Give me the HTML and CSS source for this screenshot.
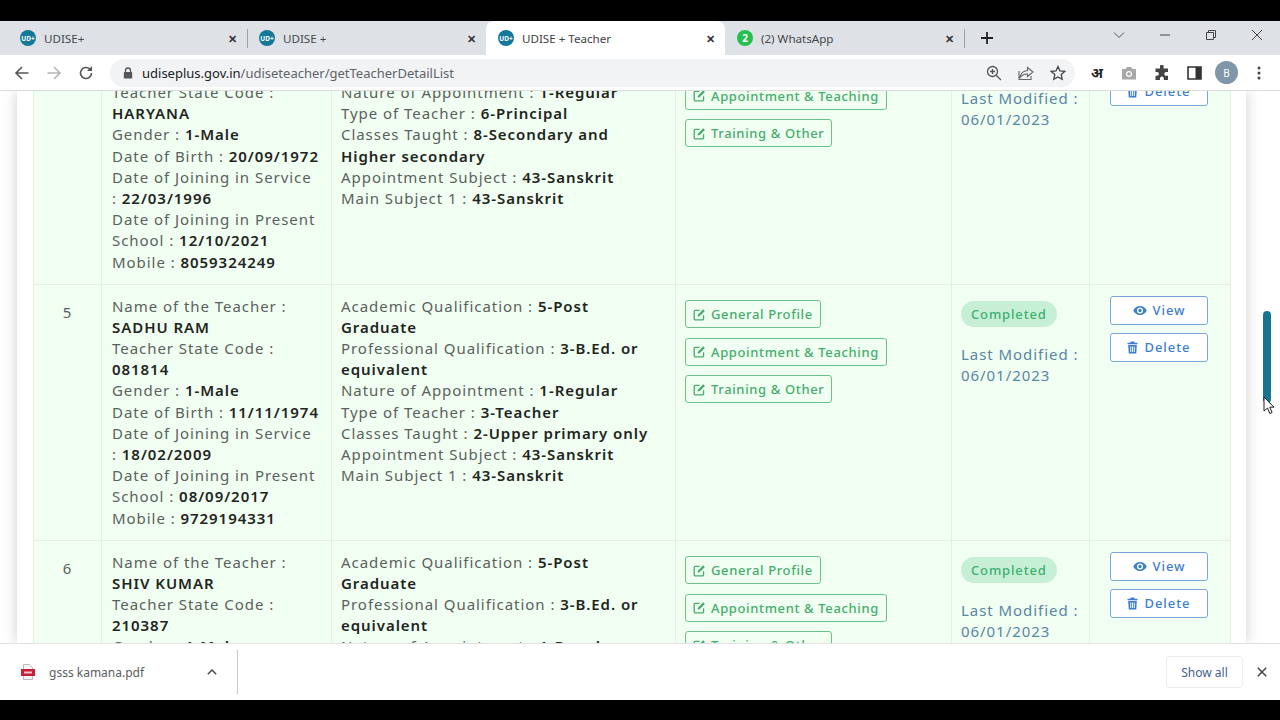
FILE: index.html
```html
<!DOCTYPE html>
<html lang="en">
<head>
<meta charset="utf-8">
<title>UDISE + Teacher</title>
<link rel="stylesheet" href="styles.css">
</head>
<body>
<svg class="defs" width="0" height="0" aria-hidden="true">
  <symbol id="edit" viewBox="0 0 16 16"><path d="M13 9v4.200a1.300 1.300 0 0 1-1.300 1.300H2.800a1.300 1.300 0 0 1-1.300-1.300V4.300A1.300 1.300 0 0 1 2.800 3H8" fill="none" stroke="currentColor" stroke-width="1.600"/><path d="M6 8.200 12.600 1.600l2 2L8 10.200l-2.400.4z" fill="currentColor"/></symbol>
  <symbol id="eye" viewBox="0 0 16 12"><path d="M8 .8C4.400.8 1.600 3.200.3 6c1.300 2.800 4.100 5.200 7.700 5.200s6.400-2.400 7.700-5.200C14.400 3.200 11.600.8 8 .8zm0 8.700A3.500 3.500 0 1 1 8 2.500a3.500 3.500 0 0 1 0 7zM8 4a2 2 0 1 0 0 4 2 2 0 0 0 0-4z" fill="currentColor"/></symbol>
  <symbol id="trash" viewBox="0 0 12 14"><path d="M4.300.5h3.400l.8 1.400H11.500v1.500H.5V1.900h3zM1.300 4.300h9.400l-.6 9.200H1.900zM3.600 5.800v6h1v-6zm1.900 0v6h1v-6zm1.900 0v6h1v-6z" fill="currentColor" fill-rule="evenodd"/></symbol>
</svg>

<div class="bar-black top"></div>

<div class="tabstrip">
  <div class="tab"><span class="fav">UD+</span><span class="tab-title">UDISE+</span><span class="tab-x">✕</span></div>
  <div class="tab"><span class="fav">UD+</span><span class="tab-title">UDISE +</span><span class="tab-x">✕</span></div>
  <div class="tab active"><span class="fav">UD+</span><span class="tab-title">UDISE + Teacher</span><span class="tab-x">✕</span></div>
  <div class="tab last"><span class="fav wa">2</span><span class="tab-title">(2) WhatsApp</span><span class="tab-x">✕</span></div>
  <svg class="plus" width="14" height="14" viewBox="0 0 14 14"><path d="M7 1v12M1 7h12" stroke="#222" stroke-width="1.800"/></svg>
  <div class="win-controls">
    <svg width="12" height="8" viewBox="0 0 12 8"><path d="M1 1.500 6 6.500l5-5" fill="none" stroke="#555" stroke-width="1"/></svg>
    <svg width="12" height="12" viewBox="0 0 12 12"><path d="M1 6h10" stroke="#444" stroke-width="1"/></svg>
    <svg width="12" height="12" viewBox="0 0 12 12"><path d="M1.500 3.500h7v7h-7zM3.500 3.500v-2h7v7h-2" fill="none" stroke="#444" stroke-width="1"/></svg>
    <svg width="12" height="12" viewBox="0 0 12 12"><path d="M1 1l10 10M11 1 1 11" stroke="#444" stroke-width="1"/></svg>
  </div>
</div>

<div class="toolbar">
  <svg class="nav" width="16" height="16" viewBox="0 0 16 16"><path d="M14.500 8H2M8 2 2 8l6 6" fill="none" stroke="#555" stroke-width="1.600"/></svg>
  <svg class="nav" width="16" height="16" viewBox="0 0 16 16"><path d="M1.500 8H14M8 2l6 6-6 6" fill="none" stroke="#b5b5b5" stroke-width="1.600"/></svg>
  <svg class="nav" width="16" height="16" viewBox="0 0 16 16"><path d="M13.500 8A5.500 5.500 0 1 1 11.800 4" fill="none" stroke="#555" stroke-width="1.600"/><path d="M14 1v5H9z" fill="#555"/></svg>
  <div class="omnibox">
    <svg class="lock" width="10" height="12" viewBox="0 0 10 12"><path d="M2.500 5V3.500a2.500 2.500 0 0 1 5 0V5" fill="none" stroke="#555" stroke-width="1.300"/><rect x=".8" y="5" width="8.400" height="6.500" rx="1" fill="#555"/></svg>
    <span class="url"><span class="host">udiseplus.gov.in</span>/udiseteacher/getTeacherDetailList</span>
    <div class="omni-icons">
      <svg width="16" height="16" viewBox="0 0 16 16"><circle cx="6.500" cy="6.500" r="5" fill="none" stroke="#555" stroke-width="1.300"/><path d="M10.200 10.200 15 15M6.500 4v5M4 6.500h5" stroke="#555" stroke-width="1.300"/></svg>
      <svg width="16" height="16" viewBox="0 0 16 16"><path d="M9.500 2.500 15 7l-5.500 4.500V9C6 9 3.500 10 2 13c.3-4 3-7 7.500-7.500z M1 6v8.500h12V11" fill="none" stroke="#666" stroke-width="1.100"/></svg>
      <svg width="16" height="16" viewBox="0 0 16 16"><path d="m8 1.500 2 4.400 4.800.5-3.600 3.200 1 4.700L8 11.900l-4.200 2.400 1-4.700L1.200 6.400 6 5.900z" fill="none" stroke="#444" stroke-width="1.300"/></svg>
    </div>
  </div>
  <div class="ext-icons">
    <span class="ext-hindi">अ</span>
    <svg width="16" height="14" viewBox="0 0 16 14"><path d="M1 3h3.500L6 1h4l1.500 2H15v10.500H1z" fill="#a8a8a8"/><circle cx="8" cy="8" r="3" fill="#fff"/><circle cx="8" cy="8" r="1.800" fill="#a8a8a8"/></svg>
    <svg width="16" height="16" viewBox="0 0 16 16"><path d="M6 1.500a1.800 1.800 0 0 1 3.600 0V3.500H14V7h-1.800a1.900 1.900 0 0 0 0 3.800H14V15H9.800v-1.500a1.900 1.900 0 0 0-3.800 0V15H1.500v-4.300H3a1.900 1.900 0 0 0 0-3.800H1.500V3.500H6z" fill="#444"/></svg>
    <svg width="15" height="14" viewBox="0 0 15 14"><path d="M1 1h13v12H1z" fill="none" stroke="#333" stroke-width="1.600"/><path d="M8.500 1H14v12H8.500z" fill="#333"/></svg>
    <span class="avatar">B</span>
    <svg class="dots" width="4" height="14" viewBox="0 0 4 14"><circle cx="2" cy="2" r="1.500" fill="#444"/><circle cx="2" cy="7" r="1.500" fill="#444"/><circle cx="2" cy="12" r="1.500" fill="#444"/></svg>
  </div>
</div>

<main class="viewport">
  <div class="card">
    <table class="teachers">
      <colgroup><col class="c1"><col class="c2"><col class="c3"><col class="c4"><col class="c5"><col class="c6"></colgroup>
      <tbody>
        <tr class="row-first">
          <td class="num">4</td>
          <td class="who">Name of the Teacher : <br><b>SUMAN</b><br>Teacher State Code : <br><b>HARYANA</b><br>Gender : <b>1-Male</b><br>Date of Birth : <b>20/09/1972</b><br>Date of Joining in Service<br>: <b>22/03/1996</b><br>Date of Joining in Present School : <b>12/10/2021</b><br>Mobile : <b>8059324249</b></td>
          <td class="qual">Academic Qualification : <b>5-Post</b><br>Professional Qualification : <b>3</b><br>Nature of Appointment : <b>1-Regular</b><br>Type of Teacher : <b>6-Principal</b><br>Classes Taught : <b>8-Secondary and Higher secondary</b><br>Appointment Subject : <b>43-Sanskrit</b><br>Main Subject 1 : <b>43-Sanskrit</b></td>
          <td class="actions">
            <a class="btn-green"><svg><use href="#edit"/></svg>General Profile</a>
            <a class="btn-green"><svg><use href="#edit"/></svg>Appointment &amp; Teaching</a>
            <a class="btn-green"><svg><use href="#edit"/></svg>Training &amp; Other</a>
          </td>
          <td class="status"><span class="pill">Completed</span><p class="modified">Last Modified : 06/01/2023</p></td>
          <td class="ops">
            <a class="btn-blue"><svg class="i-eye"><use href="#eye"/></svg>View</a>
            <a class="btn-blue"><svg class="i-trash"><use href="#trash"/></svg>Delete</a>
          </td>
        </tr>
        <tr>
          <td class="num">5</td>
          <td class="who">Name of the Teacher : <br><b>SADHU RAM</b><br>Teacher State Code : <br><b>081814</b><br>Gender : <b>1-Male</b><br>Date of Birth : <b>11/11/1974</b><br>Date of Joining in Service<br>: <b>18/02/2009</b><br>Date of Joining in Present School : <b>08/09/2017</b><br>Mobile : <b>9729194331</b></td>
          <td class="qual">Academic Qualification : <b>5-Post Graduate</b><br>Professional Qualification : <b>3-B.Ed. or equivalent</b><br>Nature of Appointment : <b>1-Regular</b><br>Type of Teacher : <b>3-Teacher</b><br>Classes Taught : <b>2-Upper primary only</b><br>Appointment Subject : <b>43-Sanskrit</b><br>Main Subject 1 : <b>43-Sanskrit</b></td>
          <td class="actions">
            <a class="btn-green"><svg><use href="#edit"/></svg>General Profile</a>
            <a class="btn-green"><svg><use href="#edit"/></svg>Appointment &amp; Teaching</a>
            <a class="btn-green"><svg><use href="#edit"/></svg>Training &amp; Other</a>
          </td>
          <td class="status"><span class="pill">Completed</span><p class="modified">Last Modified : 06/01/2023</p></td>
          <td class="ops">
            <a class="btn-blue"><svg class="i-eye"><use href="#eye"/></svg>View</a>
            <a class="btn-blue"><svg class="i-trash"><use href="#trash"/></svg>Delete</a>
          </td>
        </tr>
        <tr>
          <td class="num">6</td>
          <td class="who">Name of the Teacher : <br><b>SHIV KUMAR</b><br>Teacher State Code : <br><b>210387</b><br>Gender : <b>1-Male</b><br>Date of Birth : <b>11/11/1974</b></td>
          <td class="qual">Academic Qualification : <b>5-Post Graduate</b><br>Professional Qualification : <b>3-B.Ed. or equivalent</b><br>Nature of Appointment : <b>1-Regular</b></td>
          <td class="actions">
            <a class="btn-green"><svg><use href="#edit"/></svg>General Profile</a>
            <a class="btn-green"><svg><use href="#edit"/></svg>Appointment &amp; Teaching</a>
            <a class="btn-green"><svg><use href="#edit"/></svg>Training &amp; Other</a>
          </td>
          <td class="status"><span class="pill">Completed</span><p class="modified">Last Modified : 06/01/2023</p></td>
          <td class="ops">
            <a class="btn-blue"><svg class="i-eye"><use href="#eye"/></svg>View</a>
            <a class="btn-blue"><svg class="i-trash"><use href="#trash"/></svg>Delete</a>
          </td>
        </tr>
      </tbody>
    </table>
  </div>
  <div class="scroll-thumb"></div>
  <svg class="cursor" width="13" height="19" viewBox="0 0 13 19"><path d="M1 1v14l3.500-3 2.300 5.500 2.300-1-2.300-5.300H11z" fill="#fff" stroke="#222" stroke-width="1"/></svg>
</main>

<div class="downloads">
  <div class="dl-item">
    <svg width="14" height="16" viewBox="0 0 14 16"><path d="M2.500.5h6l3 3v12h-9z" fill="#f4f4f4" stroke="#bbb"/><rect x="0" y="5" width="14" height="7" fill="#c4203a"/><rect x="3" y="7.500" width="8" height="2" fill="#f3c3cb"/></svg>
    <span class="dl-name">gsss kamana.pdf</span>
    <svg class="dl-chev" width="10" height="6" viewBox="0 0 10 6"><path d="M.8 5.300 5 1l4.200 4.300" fill="none" stroke="#444" stroke-width="1.400"/></svg>
  </div>
  <div class="dl-sep"></div>
  <a class="show-all">Show all</a>
  <svg class="dl-close" width="10" height="10" viewBox="0 0 10 10"><path d="M.8.8l8.400 8.400M9.200.8.8 9.200" stroke="#444" stroke-width="1.500"/></svg>
</div>

<div class="bar-black bottom"></div>
</body>
</html>
```

FILE: styles.css
```css
* { box-sizing: border-box; }
html, body { margin: 0; height: 720px; overflow: hidden; background: #000; }
body { display: flex; flex-direction: column; font-family: "Noto Sans", "Open Sans", sans-serif; }
.defs { position: absolute; }

.bar-black { background: #000; flex: none; }
.bar-black.top { height: 21px; }
.bar-black.bottom { height: 20px; }

/* tabs */
.tab { width: 239px; display: flex; align-items: center; padding: 0 8px 0 20px; font-size: 11.600px; color: #45494e; position: relative; }
.tabstrip { flex: none; height: 34px; background: #dee1e6; display: flex; align-items: stretch; position: relative; }
.tab:first-child { width: 248px; padding-right: 9px; }
.tab:nth-child(2) { width: 238px; padding-left: 11px; }
.tab.active { background: #fff; border-radius: 8px 8px 0 0; width: 239px; padding-left: 12px; color: #3c4043; }
.tab.last { width: 240px; padding-left: 12px; padding-right: 9px; }
.tab:first-child::after, .tab.last::after { content: ""; position: absolute; right: 0; top: 8px; height: 19px; width: 1px; background: #9fa3a8; }
.fav { width: 16px; height: 16px; border-radius: 50%; background: #13799b; color: #fff; font-size: 6.500px; font-weight: 700; display: flex; align-items: center; justify-content: center; margin-right: 8px; flex: none; }
.fav.wa { background: #25c04f; font-size: 10px; }
.tab-title { flex: 1; white-space: nowrap; }
.tab-x { font-size: 11px; color: #333; font-weight: 700; width: 14px; text-align: center; }
.plus { align-self: center; margin-left: 15px; }
.win-controls { margin-left: auto; display: flex; align-items: center; gap: 34px; padding: 0 17px 6px 0; }

/* toolbar */
.toolbar { flex: none; height: 36px; background: #fff; display: flex; align-items: center; padding-left: 14px; border-bottom: 1px solid #dcdcdc; }
.nav { margin-right: 16px; flex: none; }
.omnibox { width: 965px; height: 28px; background: #f1f3f4; border-radius: 14px; display: flex; align-items: center; padding: 0 9px 0 13px; font-size: 13px; }
.lock { flex: none; margin-right: 9px; }
.url { color: #5f6368; white-space: nowrap; font-size: 13px; }
.host { color: #202124; }
.omni-icons { margin-left: auto; display: flex; gap: 16px; align-items: center; }
.ext-icons { display: flex; align-items: center; margin-left: 15px; gap: 17px; }
.ext-hindi { font-family: "DejaVu Sans", "Noto Sans", sans-serif; font-size: 14px; font-weight: 700; color: #222; width: 14px; text-align: center; }
.avatar { width: 23px; height: 23px; border-radius: 50%; background: #7f97a8; color: #fff; font-size: 10px; display: flex; align-items: center; justify-content: center; margin-left: -4px; }
.dots { margin-left: 2px; }

/* page */
.viewport { flex: 1; min-height: 0; background: #fff; overflow: hidden; position: relative; padding: 0 34px 0 17px; }
.card { background: #fff; height: 100%; padding: 0 16px; box-shadow: 0 0 14px rgba(0, 0, 0, .2); overflow: hidden; }
.teachers { width: 1197px; margin-top: -63px; border-collapse: collapse; table-layout: fixed; background: #f0fff1; font-size: 15px; line-height: 21.200px; letter-spacing: .95px; color: #5b5f5f; }
.c1 { width: 68px; } .c2 { width: 230px; } .c3 { width: 344px; } .c4 { width: 276px; } .c5 { width: 138px; } .c6 { width: 141px; }
.teachers td { border: 1px solid #e4eee6; vertical-align: top; padding: 10.500px 10px 10px; }
.teachers tr { height: 256px; }
.teachers b { font-weight: 600; color: #1f2422; }
.teachers td.num { text-align: center; padding-top: 17px; padding-right: 10px; }
.teachers td.who { padding-right: 8px; }
.teachers td.qual { padding-left: 9px; }

.teachers td.actions { padding-top: 15px; padding-left: 9px; }
.btn-green { display: flex; width: max-content; align-items: center; height: 28px; padding: 0 7px; margin-bottom: 9.500px; border: 1px solid #6cc28c; border-radius: 3px; color: #46ac6d; font-size: 13px; font-weight: 500; letter-spacing: .63px; line-height: 26px; }
.btn-green svg { width: 13px; height: 13px; margin-right: 5px; }

.teachers td.status { padding-top: 16px; padding-left: 9px; }
.pill { display: inline-block; height: 26px; line-height: 26px; padding: 0 10px; border-radius: 13px; background: #c7efd6; color: #3cb06f; font-size: 13px; font-weight: 500; letter-spacing: .85px; }
.modified { margin: 17px 0 0; color: #5a86a4; font-size: 15px; }

.teachers td.ops { padding-top: 11px; padding-left: 20px; padding-right: 21px; }
.btn-blue { display: flex; align-items: center; justify-content: center; width: 98px; height: 29px; margin-bottom: 8px; border: 1px solid #7aa5e2; border-radius: 3px; background: #fff; color: #3d7fce; font-size: 13px; font-weight: 500; }
.i-eye { width: 14px; height: 11px; margin-right: 6px; }
.i-trash { width: 11px; height: 13px; margin-right: 6px; }

.scroll-thumb { position: absolute; left: 1263px; top: 220px; width: 8px; height: 92px; border-radius: 4px; background: #17758f; }
.cursor { position: absolute; left: 1263px; top: 305px; }

/* downloads */
.downloads { flex: none; height: 57px; background: #fff; border-top: 1px solid #e2e2e2; display: flex; align-items: center; padding: 0 13px 0 21px; }
.dl-item { display: flex; align-items: center; width: 196px; }
.dl-name { font-size: 12px; color: #5a5d60; margin-left: 14px; }
.dl-chev { margin-left: auto; }
.dl-sep { width: 1px; height: 44px; background: #c8c8c8; margin-left: 20px; }
.show-all { margin-left: auto; width: 77px; height: 32px; border: 1px solid #ececec; border-radius: 4px; font-size: 12px; color: #46608f; display: flex; align-items: center; justify-content: center; }
.dl-close { margin-left: 14px; }
```
